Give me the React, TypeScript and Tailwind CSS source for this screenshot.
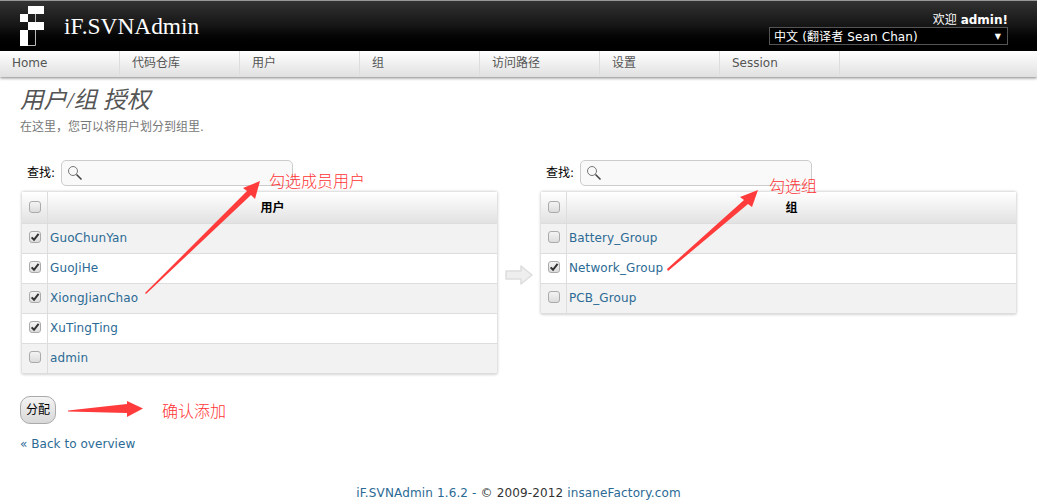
const FONT = "font-['DejaVu_Sans','Noto_Sans_CJK_SC',sans-serif]";
const NAV = ["Home", "代码仓库", "用户", "组", "访问路径", "设置", "Session"];
const USERS: [string, boolean][] = [["GuoChunYan", true], ["GuoJiHe", true], ["XiongJianChao", true], ["XuTingTing", true], ["admin", false]];
const GROUPS: [string, boolean][] = [["Battery_Group", false], ["Network_Group", true], ["PCB_Group", false]];

function Logo() {
  return (
    <svg width="24" height="40" viewBox="0 0 24 40" className="shrink-0">
      <rect x="8" y="0" width="16" height="8" fill="#fff" />
      <rect x="0" y="8" width="8" height="8" fill="#fff" />
      <rect x="8" y="16" width="16" height="8" fill="#fff" />
      <rect x="0" y="24" width="8" height="16" fill="#fff" />
      <path d="M15.5 8V16M15.5 24V39.5H8" fill="none" stroke="#bbb" strokeWidth="1" />
    </svg>
  );
}

function Box({ checked }: { checked: boolean }) {
  return (
    <div className="relative w-[12px] h-[12px] rounded-[3px] border border-[#aaa] bg-gradient-to-b from-[#f4f4f4] to-[#dcdcdc]">
      {checked && (
        <svg viewBox="0 0 12 12" width="12" height="12" className="absolute -left-px -top-px">
          <path d="M2.6 6.4L5 8.8L9.6 2.8" fill="none" stroke="#333" strokeWidth="2" />
        </svg>
      )}
    </div>
  );
}

function Search() {
  return (
    <div className="flex items-center h-[26px] mb-[6px]">
      <span className="w-[39px] pl-[5px] text-[12px] text-black whitespace-nowrap">查找:</span>
      <div className="w-[232px] h-[26px] rounded-[5px] border border-[#ccc] bg-[#f9f9f9] flex items-center pl-[5px]">
        <svg width="16" height="16" viewBox="0 0 16 16" fill="none">
          <circle cx="6" cy="6" r="4.5" stroke="#777" strokeWidth="1" />
          <path d="M9.5 9.5L14.5 14.5" stroke="#444" strokeWidth="1.6" />
        </svg>
      </div>
    </div>
  );
}

function ListTable({ title, rows }: { title: string; rows: [string, boolean][] }) {
  return (
    <div className="w-[475px] border-b border-[#ddd] shadow-[0_0_3px_rgba(0,0,0,0.3)]">
      <div className="flex h-[31px] bg-gradient-to-b from-white to-[#e2e2e2]">
        <div className="w-[26px] pb-[2px] border-r border-[#ddd] flex items-center justify-center"><Box checked={false} /></div>
        <div className="flex-1 pt-px flex items-center justify-center text-[12px] font-bold text-black">{title}</div>
      </div>
      {rows.map(([name, on], i) => (
        <div key={name} className={`flex h-[30px] border-t border-[#ddd] ${i % 2 === 0 ? "bg-[#f2f2f2]" : "bg-white"}`}>
          <div className="w-[26px] pb-[3px] border-r border-[#ddd] flex items-center justify-center"><Box checked={on} /></div>
          <div className="flex-1 pb-[2px] flex items-center pl-[2px] text-[12px] tracking-[0.12px] text-[#2b6a94]">{name}</div>
        </div>
      ))}
    </div>
  );
}

function RedArrow({ d }: { d: string }) {
  return (
    <svg className="absolute left-0 top-0 pointer-events-none" width="1037" height="503" viewBox="0 0 1037 503">
      <path d={d} fill="#ff3b3b" />
    </svg>
  );
}

export default function App() {
  return (
    <div className={`relative w-[1037px] h-[503px] overflow-hidden bg-white ${FONT}`}>
      <header className="h-[51px] border-t border-[#999] bg-gradient-to-b from-[#333] via-[#151515] to-black flex items-start justify-between pl-[20px] pr-[29px]">
        <div className="flex items-center pt-[5px]">
          <Logo />
          <span className="ml-[20px] -mt-[1px] text-[23.4px] leading-[26px] text-white font-['Liberation_Serif','Noto_Sans_CJK_SC',serif]">iF.SVNAdmin</span>
        </div>
        <div className="flex flex-col items-end pt-[12px]">
          <div className="text-[12px] leading-[14px] text-white">欢迎 <b>admin!</b></div>
          <div className="w-[239px] h-[18px] border border-[#555] bg-black text-white text-[12px] tracking-[0.12px] pl-[4px] pt-px flex justify-between items-center pr-[6px]">
            <span>中文 (翻译者 Sean Chan)</span>
            <span className="text-[8px]">▼</span>
          </div>
        </div>
      </header>
      <nav className="h-[26px] flex bg-gradient-to-b from-white to-[#e0e0e0] shadow-[0_1px_3px_rgba(0,0,0,0.5)]">
        {NAV.map((n) => (
          <div key={n} className="w-[120px] h-[24px] border-r border-[#ddd] pl-[12px] text-[12px] leading-[25px] text-[#555]">{n}</div>
        ))}
      </nav>
      <main className="pl-[20px] pt-[9px]">
        <h1 className="text-[23.5px] leading-[28px] italic text-[#555] font-['Liberation_Serif','Noto_Sans_CJK_SC',serif]">用户/组 授权</h1>
        <p className="mt-[6px] text-[12px] leading-[14px] text-[#777]">在这里，您可以将用户划分到组里.</p>
        <div className="flex items-start pl-[2px] mt-[26px]">
          <div>
            <Search />
            <ListTable title="用户" rows={USERS} />
          </div>
          <div className="w-[44px] pt-[105px] flex justify-center">
            <svg width="28" height="20" viewBox="0 0 28 20">
              <path d="M1 6H16V1L27 10L16 19V14H1Z" fill="#eeeeee" stroke="#ddd" strokeWidth="1.5" strokeLinejoin="round" />
            </svg>
          </div>
          <div>
            <Search />
            <ListTable title="组" rows={GROUPS} />
          </div>
        </div>
        <button className="block mt-[22px] w-[36px] h-[28px] rounded-[10px] border border-[#aaa] bg-gradient-to-b from-[#f4f4f4] to-[#d8d8d8] text-[12px] text-black p-0">分配</button>
        <a className="block mt-[13px] text-[12px] leading-[14px] tracking-[0.05px] text-[#2b6a94]">« Back to overview</a>
      </main>
      <footer className="absolute left-0 right-0 top-[486px] text-center text-[12px] leading-[14px] tracking-[0.14px] text-[#2b6a94]">
        iF.SVNAdmin 1.6.2 - <span className="text-[#333]">© 2009-2012</span> insaneFactory.com
      </footer>
      <RedArrow d="M145 293L247 191L243 188L260 181L255 199L251 195L146 294Z" />
      <RedArrow d="M667 269L744 200L740 197L758 190L752 207L748 204L668 271Z" />
      <RedArrow d="M68 410.5L127 404V401L143 408.5L127 417V413L68 411.5Z" />
      <span className="absolute left-[269px] top-[172px] text-[16px] leading-[20px] font-light text-[#f33]">勾选成员用户</span>
      <span className="absolute left-[769px] top-[177px] text-[16px] leading-[20px] font-light text-[#f33]">勾选组</span>
      <span className="absolute left-[162px] top-[402px] text-[16px] leading-[20px] font-light text-[#f33]">确认添加</span>
    </div>
  );
}
